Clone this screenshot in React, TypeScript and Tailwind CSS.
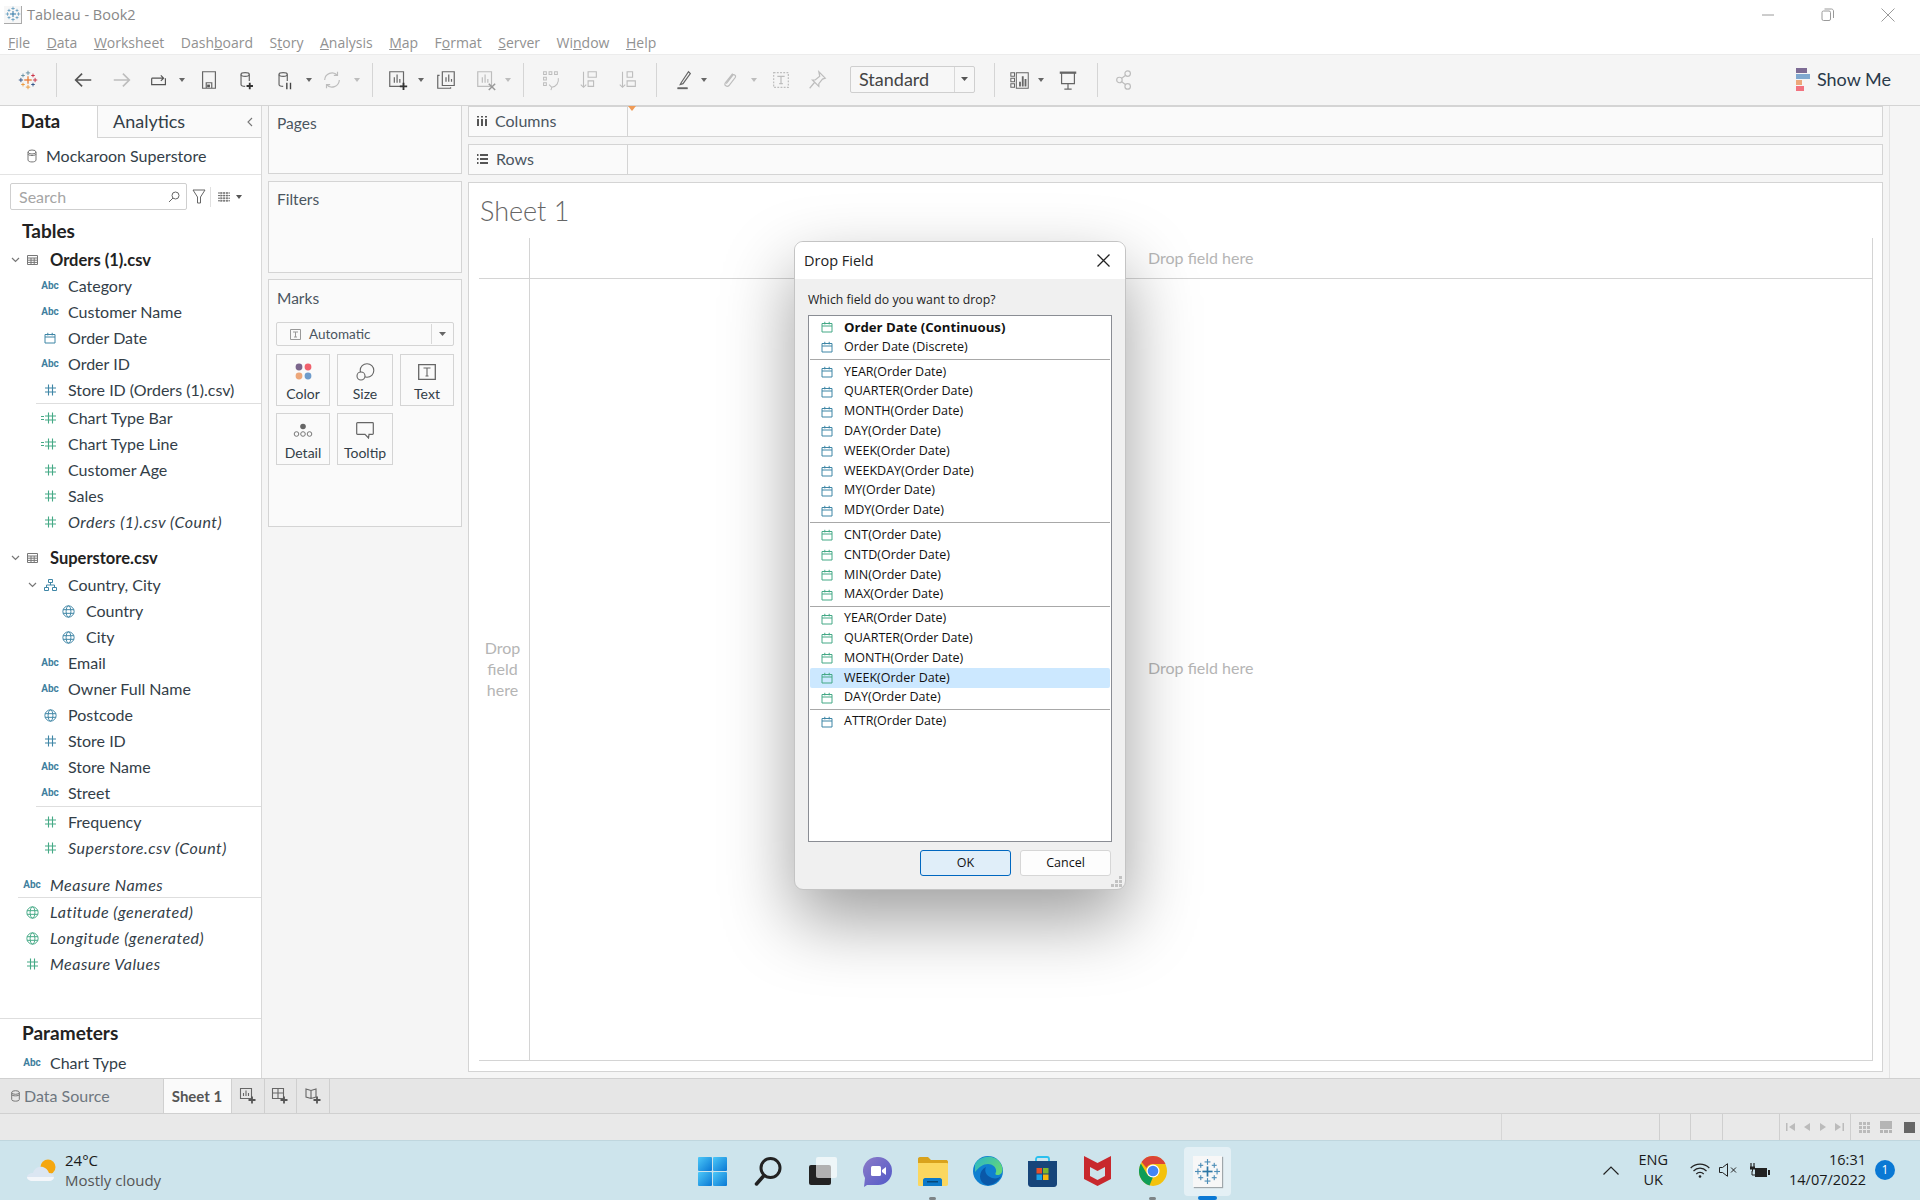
import type { ReactNode } from "react";

const BLUE = "#3f86a6";
const GREEN = "#45a986";
const UI = "[font-family:Lato,sans-serif]";
const SEGOE = "[font-family:'Open_Sans',sans-serif]";

function TableauLogo({ size, colors }: { size: number; colors: string[] }) {
  const [c, n, e, s, w] = colors;
  const plus = (x: number, y: number, r: number, t: number, fill: string) => (
    <g fill={fill}>
      <rect x={x - r} y={y - t / 2} width={r * 2} height={t} />
      <rect x={x - t / 2} y={y - r} width={t} height={r * 2} />
    </g>
  );
  return (
    <svg width={size} height={size} viewBox="0 0 24 24">
      {plus(12, 12, 4.5, 1.5, c)}
      {plus(12, 3.5, 2.6, 1, n)}
      {plus(20.5, 12, 2.6, 1, e)}
      {plus(12, 20.5, 2.6, 1, s)}
      {plus(3.5, 12, 2.6, 1, w)}
      {plus(6, 6.5, 2.2, 1, n)}
      {plus(18, 6.5, 2.2, 1, e)}
      {plus(6, 17.5, 2.2, 1, s)}
      {plus(18, 17.5, 2.2, 1, w)}
    </svg>
  );
}

function Ic({ children, size = 22, color = "#666" }: { children: ReactNode; size?: number; color?: string }) {
  return (
    <svg width={size} height={size} viewBox="0 0 24 24" fill="none" stroke={color} strokeWidth="1.3">
      {children}
    </svg>
  );
}

function Slot({ ml, children }: { ml: string; children: ReactNode }) {
  return <div className={`${ml} flex w-6 shrink-0 items-center justify-center`}>{children}</div>;
}

function Caret({ ml, color = "#666" }: { ml: string; color?: string }) {
  return (
    <div className={`${ml} flex w-2 shrink-0 justify-center`}>
      <svg width="6" height="4" viewBox="0 0 6 4">
        <path d="M0 0h6L3 4z" fill={color} />
      </svg>
    </div>
  );
}

function Sep({ ml }: { ml: string }) {
  return <div className={`${ml} h-[34px] w-px shrink-0 bg-[#d5d5d5]`} />;
}

function Cylinder({ color = "#666" }: { color?: string }) {
  return (
    <>
      <ellipse cx="10" cy="6" rx="4.5" ry="2" stroke={color} />
      <path d="M5.5 6v11c0 1 2 2 4.5 2M14.5 6v7" stroke={color} />
    </>
  );
}

function Toolbar() {
  const off = "#bdbdbd";
  return (
    <div className="flex h-[51px] shrink-0 items-center border-t border-[#ececec] bg-[#f5f5f5]">
      <Slot ml="ml-[16px]">
        <TableauLogo size={20} colors={["#e8762d", "#5b879b", "#c72037", "#eb912b", "#1f457e"]} />
      </Slot>
      <Sep ml="ml-[16px]" />
      <Slot ml="ml-[14px]">
        <Ic color="#555"><path d="M21 12H4M11 5l-7 7 7 7" strokeWidth="1.8" /></Ic>
      </Slot>
      <Slot ml="ml-[15px]">
        <Ic color={off}><path d="M3 12h17M13 5l7 7-7 7" strokeWidth="1.8" /></Ic>
      </Slot>
      <Slot ml="ml-[13px]">
        <Ic color="#555"><path d="M4 10v7h15v-7M4 10h13M14 7l3 3-3 3" strokeWidth="1.3" /></Ic>
      </Slot>
      <Caret ml="ml-[7px]" />
      <Slot ml="ml-[11px]">
        <Ic color="#666"><path d="M5 3h14v18H5zM9 21v-6h6v6" /><rect x="10" y="17" width="3" height="3" fill="#555" stroke="none" /></Ic>
      </Slot>
      <Slot ml="ml-[14px]">
        <Ic color="#666"><Cylinder color="#666" /><path d="M15 15v7M11.5 18.500h7" stroke="#333" strokeWidth="2" /></Ic>
      </Slot>
      <Slot ml="ml-[14px]">
        <Ic color="#666"><Cylinder color="#666" /><path d="M14 15v7M18 15v7" stroke="#444" strokeWidth="1.5" /></Ic>
      </Slot>
      <Caret ml="ml-[8px]" />
      <Slot ml="ml-[7px]">
        <Ic color={off}><path d="M20 12a8 8 0 0 1-14 5M4 12a8 8 0 0 1 14-5M18 3v4h-4M6 21v-4h4" /></Ic>
      </Slot>
      <Caret ml="ml-[9px]" color={off} />
      <Sep ml="ml-[11px]" />
      <Slot ml="ml-[13px]">
        <Ic color="#666"><path d="M3 3h15v16H3zM8 15V9M11 15V6M14 15v-4" /><path d="M18 15v8M14 19h8" stroke="#333" strokeWidth="2" /></Ic>
      </Slot>
      <Caret ml="ml-[7px]" />
      <Slot ml="ml-[9px]">
        <Ic color="#666"><path d="M8 3h13v15H8zM5 7H3v14h14v-1M12 14V9M15 14V6M18 14v-3" /></Ic>
      </Slot>
      <Slot ml="ml-[16px]">
        <Ic color={off}><path d="M3 3h15v16H3zM8 15V9M11 15V6M14 15v-4" /><path d="M15 16l7 7M22 16l-7 7" stroke="#999" strokeWidth="1.6" /></Ic>
      </Slot>
      <Caret ml="ml-[6px]" color={off} />
      <Sep ml="ml-[11px]" />
      <Slot ml="ml-[14px]">
        <Ic color={off}>
          <path d="M5 3h3v3H5zM11 3h3v3h-3zM17 3h3v3h-3zM5 9h3v3H5zM5 15h3v3H5zM21 10c1 5-2 9-7 10M11 17l3 3-1 3" strokeWidth="1.1" />
        </Ic>
      </Slot>
      <Slot ml="ml-[15px]">
        <Ic color={off}><path d="M6 3v17M3 17l3 3 3-3M11 3h9v6h-9zM11 13h6v6h-6z" strokeWidth="1.2" /></Ic>
      </Slot>
      <Slot ml="ml-[15px]">
        <Ic color={off}><path d="M6 3v17M3 17l3 3 3-3M11 3h6v6h-6zM11 13h9v6h-9z" strokeWidth="1.2" /></Ic>
      </Slot>
      <Sep ml="ml-[16px]" />
      <Slot ml="ml-[14px]">
        <Ic color="#666"><path d="M10 15l8-12 2 2-8 11-3 1zM6 21h11" /><path d="M6 21h11" strokeWidth="2" /></Ic>
      </Slot>
      <Caret ml="ml-[5px]" />
      <Slot ml="ml-[9px]">
        <Ic color={off}><path d="M16 5L8 15c-2 3 2 5 4 3l7-9c1-2-2-4-3-2l-7 9" /></Ic>
      </Slot>
      <Caret ml="ml-[9px]" color={off} />
      <Slot ml="ml-[11px]">
        <Ic color={off}><rect x="4" y="4" width="16" height="16" strokeDasharray="2 1.500" /><path d="M8 8h8M12 8v8M10 16h4" /></Ic>
      </Slot>
      <Slot ml="ml-[12px]">
        <Ic color={off}><path d="M14 3l7 7-3 1-4 5 0 3-7-7 3 0 5-4zM9 15l-5 6" /></Ic>
      </Slot>
      <div className={`ml-[21px] flex h-[27px] w-[125px] shrink-0 -translate-y-px items-center rounded-[2px] border border-[#cfcfcf] bg-[#f7f7f7] text-[18px] text-[#444] ${UI}`}>
        <span className="w-[103px] pl-2">Standard</span>
        <span className="flex h-full flex-1 items-center justify-center border-l border-[#d8d8d8]">
          <svg width="7" height="4" viewBox="0 0 7 4"><path d="M0 0h7L3.500 4z" fill="#555" /></svg>
        </span>
      </div>
      <Sep ml="ml-[19px]" />
      <Slot ml="ml-[13px]">
        <Ic color="#666"><path d="M2 4h4v4H2zM2 10h4v4H2zM2 16h4v4H2zM8 4h13v17H8z" strokeWidth="1.1" /><path d="M12 19v-5M15 19V8M18 19v-8" strokeWidth="2" /></Ic>
      </Slot>
      <Caret ml="ml-[5px]" />
      <Slot ml="ml-[11px]">
        <Ic color="#666"><path d="M3 4h18" strokeWidth="2.500" /><path d="M5 4v12h14V4M12 16v6M8 22h8" /></Ic>
      </Slot>
      <Sep ml="ml-[17px]" />
      <Slot ml="ml-[14px]">
        <Ic color={off}><circle cx="7" cy="12" r="3" /><circle cx="16" cy="5" r="3" /><circle cx="16" cy="19" r="3" /><path d="M9.500 10l4-3M9.500 14l4 3" /></Ic>
      </Slot>
      <div className={`ml-auto flex -translate-y-px items-center gap-[7px] pr-[29px] text-[18px] text-[#2a3a4a] ${UI}`}>
        <div className="flex w-[14px] flex-col gap-px">
          <div className="h-[5px] w-[11px] bg-[#7d6b94]" />
          <div className="h-[5px] w-[14px] bg-[#7fa8cf]" />
          <div className="h-[5px] w-[6px] bg-[#eda77a]" />
          <div className="h-[5px] w-[8px] bg-[#f2727f]" />
        </div>
        <span>Show Me</span>
      </div>
    </div>
  );
}

function Cal({ color }: { color: string }) {
  return (
    <svg width="12" height="12" viewBox="0 0 12 12" fill="none" stroke={color} strokeWidth="1">
      <path d="M1 2.500h10v8.500H1zM1 5h10M3.800 .8v2.600M8.200 .8v2.600" />
    </svg>
  );
}

function Hash({ color, dash }: { color: string; dash?: boolean }) {
  return (
    <svg width="18" height="12" viewBox="0 0 18 12" fill="none" stroke={color} strokeWidth="1.1">
      <path d="M7.500 .5v11M11.500 .5v11M4 4h11M4 8h11" />
      {dash ? <path d="M0 4.500h3M0 7.500h3" /> : null}
    </svg>
  );
}

function Globe({ color }: { color: string }) {
  return (
    <svg width="13" height="13" viewBox="0 0 12 12" fill="none" stroke={color} strokeWidth="0.9">
      <circle cx="6" cy="6" r="5.200" />
      <ellipse cx="6" cy="6" rx="2.200" ry="5.200" />
      <path d="M1 4.300h10M1 7.700h10" />
    </svg>
  );
}

function Abc() {
  return <span className={`text-[10px] font-bold leading-none text-[#3f7f9e] [font-family:Roboto,sans-serif]`}>Abc</span>;
}

function TableIcon() {
  return (
    <svg width="11" height="10" viewBox="0 0 11 10" fill="none" stroke="#777" strokeWidth="1">
      <path d="M.5.5h10v9H.5zM.5 3h10M.5 5.200h10M.5 7.400h10M4 3v6.500M7.200 3v6.500" />
    </svg>
  );
}

function Chevron({ className = "" }: { className?: string }) {
  return (
    <svg className={className} width="9" height="6" viewBox="0 0 9 6" fill="none" stroke="#777" strokeWidth="1.2">
      <path d="M1 1l3.500 3.500L8 1" />
    </svg>
  );
}

type RowProps = {
  icon: ReactNode;
  label: string;
  italic?: boolean;
  indent?: string;
  h?: string;
};

function FieldRow({ icon, label, italic, indent = "pl-[41px]", h = "h-[26px]" }: RowProps) {
  return (
    <div className={`flex ${h} shrink-0 items-center ${indent}`}>
      <span className="flex w-[18px] shrink-0 justify-center">{icon}</span>
      <span className={`ml-[9px] whitespace-nowrap text-[16px] text-[#333e48] ${italic ? "italic tracking-[0.5px]" : ""}`}>{label}</span>
    </div>
  );
}

function TableHeader({ label, className = "" }: { label: string; className?: string }) {
  return (
    <div className={`flex h-[26px] items-center pl-[11px] ${className}`}>
      <Chevron />
      <span className="ml-[7px]"><TableIcon /></span>
      <span className="ml-[12px] text-[16.500px] font-bold text-[#222]">{label}</span>
    </div>
  );
}

function Sidebar() {
  return (
    <div className={`flex w-[262px] shrink-0 flex-col border-r border-[#d8d8d8] bg-white ${UI}`}>
      <div className="flex h-[32px] shrink-0">
        <div className="flex w-[98px] items-center justify-center border-r border-[#d4d4d4] pr-[16px] text-[18.500px] font-bold text-[#222]">Data</div>
        <div className="flex flex-1 items-center justify-between border-b border-[#d4d4d4] bg-[#fafafa] pl-[15px] pr-[8px] text-[18px] text-[#333e48]">
          <span>Analytics</span>
          <svg width="6" height="10" viewBox="0 0 6 10" fill="none" stroke="#777" strokeWidth="1.1"><path d="M5 1L1 5l4 4" /></svg>
        </div>
      </div>
      <div className="flex h-[37px] shrink-0 items-center border-b border-[#e3e3e3] pb-px pl-[27px] text-[16px] text-[#333e48]">
        <svg width="10" height="14" viewBox="0 0 10 14" fill="none" stroke="#777" strokeWidth="1"><ellipse cx="5" cy="3" rx="4" ry="2" /><path d="M1 3v8c0 2.600 8 2.600 8 0V3M1 5c0 2 8 2 8 0" /></svg>
        <span className="ml-[9px]">Mockaroon Superstore</span>
      </div>
      <div className="mt-[8px] flex h-[27px] shrink-0 items-center pl-[10px]">
        <div className="flex h-full w-[177px] items-center justify-between rounded-[2px] border border-[#cfcfcf] pl-[8px] pr-[6px] text-[16px] text-[#a5a5a5]">
          <span>Search</span>
          <svg width="12" height="12" viewBox="0 0 12 12" fill="none" stroke="#666" strokeWidth="1"><circle cx="7.500" cy="4.500" r="3.500" /><path d="M5 7l-4 4" /></svg>
        </div>
        <svg className="ml-[5px]" width="14" height="16" viewBox="0 0 14 16" fill="none" stroke="#666" strokeWidth="1"><path d="M1 1h12L8.500 8v6h-3V8z" /></svg>
        <div className="ml-[4px] h-[20px] w-px bg-[#e0e0e0]" />
        <svg className="ml-[7px]" width="12" height="10" viewBox="0 0 12 10" fill="none" stroke="#666" strokeWidth="1"><path d="M0 1h12M0 3.600h12M0 6.200h12M0 8.800h12M3 0v10M6 0v10M9 0v10" strokeDasharray="2 .6" /></svg>
        <svg className="ml-[6px]" width="6" height="4" viewBox="0 0 6 4"><path d="M0 0h6L3 4z" fill="#555" /></svg>
      </div>
      <div className="ml-[22px] mt-[8px] flex h-[26px] shrink-0 items-center text-[19px] font-bold text-[#222]">Tables</div>
      <TableHeader label="Orders (1).csv" className="mt-[3px] shrink-0" />
      <div className="flex shrink-0 flex-col">
        <FieldRow icon={<Abc />} label="Category" />
        <FieldRow icon={<Abc />} label="Customer Name" />
        <FieldRow icon={<Cal color={BLUE} />} label="Order Date" />
        <FieldRow icon={<Abc />} label="Order ID" />
        <FieldRow icon={<Hash color={BLUE} />} label="Store ID (Orders (1).csv)" />
      </div>
      <div className="ml-[36px] h-px shrink-0 bg-[#dedede]" />
      <div className="mt-px flex shrink-0 flex-col">
        <FieldRow icon={<Hash color={GREEN} dash />} label="Chart Type Bar" />
        <FieldRow icon={<Hash color={GREEN} dash />} label="Chart Type Line" />
        <FieldRow icon={<Hash color={GREEN} />} label="Customer Age" />
        <FieldRow icon={<Hash color={GREEN} />} label="Sales" />
        <FieldRow icon={<Hash color={GREEN} />} label="Orders (1).csv (Count)" italic />
      </div>
      <TableHeader label="Superstore.csv" className="mt-[10px] shrink-0" />
      <div className="mt-px flex shrink-0 flex-col">
        <div className="flex h-[26px] items-center pl-[28px]">
          <Chevron />
          <span className="ml-[4px] flex w-[18px] justify-center">
            <svg width="13" height="12" viewBox="0 0 13 12" fill="none" stroke={BLUE} strokeWidth="1"><path d="M4.500.5h4v3h-4zM.5 8.500h4v3h-4zM8.500 8.500h4v3h-4zM6.500 3.500V6M2.500 8.500V6h8v2.500" /></svg>
          </span>
          <span className="ml-[9px] text-[16px] text-[#333e48]">Country, City</span>
        </div>
        <FieldRow icon={<Globe color={BLUE} />} label="Country" indent="pl-[59px]" />
        <FieldRow icon={<Globe color={BLUE} />} label="City" indent="pl-[59px]" />
        <FieldRow icon={<Abc />} label="Email" />
        <FieldRow icon={<Abc />} label="Owner Full Name" />
        <FieldRow icon={<Globe color={BLUE} />} label="Postcode" />
        <FieldRow icon={<Hash color={BLUE} />} label="Store ID" />
        <FieldRow icon={<Abc />} label="Store Name" />
        <FieldRow icon={<Abc />} label="Street" />
      </div>
      <div className="ml-[36px] h-px shrink-0 bg-[#dedede]" />
      <div className="mt-[2px] flex shrink-0 flex-col">
        <FieldRow icon={<Hash color={GREEN} />} label="Frequency" />
        <FieldRow icon={<Hash color={GREEN} />} label="Superstore.csv (Count)" italic />
      </div>
      <div className="mt-[11px] flex shrink-0 flex-col">
        <FieldRow icon={<Abc />} label="Measure Names" italic indent="pl-[23px]" h="h-[25px]" />
      </div>
      <div className="ml-[18px] h-px shrink-0 bg-[#dedede]" />
      <div className="mt-px flex shrink-0 flex-col">
        <FieldRow icon={<Globe color={GREEN} />} label="Latitude (generated)" italic indent="pl-[23px]" />
        <FieldRow icon={<Globe color={GREEN} />} label="Longitude (generated)" italic indent="pl-[23px]" />
        <FieldRow icon={<Hash color={GREEN} />} label="Measure Values" italic indent="pl-[23px]" />
      </div>
      <div className="mt-[41px] h-px shrink-0 bg-[#dedede]" />
      <div className="ml-[22px] mt-px flex h-[26px] shrink-0 items-center text-[19px] font-bold text-[#222]">Parameters</div>
      <div className="mt-[4px] shrink-0">
        <FieldRow icon={<Abc />} label="Chart Type" indent="pl-[23px]" />
      </div>
    </div>
  );
}

function MarkCard({ label, w, icon }: { label: string; w: string; icon: ReactNode }) {
  return (
    <div className={`flex ${w} h-[52px] flex-col items-center border border-[#d4d4d4] bg-[#fafafa]`}>
      <div className="flex h-[29px] items-center justify-center pt-1">{icon}</div>
      <span className="mt-px text-[14px] leading-[18px] text-[#333e48]">{label}</span>
    </div>
  );
}

function LeftPanels() {
  return (
    <div className={`ml-[6px] flex w-[194px] shrink-0 flex-col text-[#4a5560] ${UI}`}>
      <div className="h-[68px] border-x border-b border-[#d4d4d4] bg-[#fafafa] pl-[8px] pt-[6px] text-[15.500px]">Pages</div>
      <div className="mt-[7px] h-[92px] border border-[#d4d4d4] bg-[#fafafa] pl-[8px] pt-[6px] text-[15.500px]">Filters</div>
      <div className="mt-[6px] h-[248px] border border-[#d4d4d4] bg-[#fafafa] px-[7px] pt-[7px]">
        <div className="pl-px text-[15.500px] leading-[22px]">Marks</div>
        <div className="mt-[13px] flex h-[24px] items-center rounded-[2px] border border-[#d4d4d4] text-[13.500px]">
          <div className="flex w-[155px] items-center border-r border-[#d8d8d8] pl-[13px]">
            <svg width="11" height="11" viewBox="0 0 11 11" fill="none" stroke="#999" strokeWidth="1"><path d="M.5.5h10v10H.5zM3 3h5M5.500 3v5M4 8h3" /></svg>
            <span className="ml-[8px]">Automatic</span>
          </div>
          <span className="flex flex-1 justify-center">
            <svg width="7" height="4" viewBox="0 0 7 4"><path d="M0 0h7L3.500 4z" fill="#666" /></svg>
          </span>
        </div>
        <div className="mt-[8px] flex gap-[7px]">
          <MarkCard
            label="Color"
            w="w-[54px]"
            icon={
              <svg width="17" height="17" viewBox="0 0 17 17">
                <circle cx="4" cy="4" r="3.400" fill="#7b668c" />
                <circle cx="13" cy="4" r="3.400" fill="#f0616d" />
                <circle cx="4" cy="13" r="3.400" fill="#eda77a" />
                <circle cx="13" cy="13" r="3.400" fill="#6f9ccb" />
              </svg>
            }
          />
          <MarkCard
            label="Size"
            w="w-[56px]"
            icon={
              <svg width="19" height="18" viewBox="0 0 19 18" fill="none" stroke="#666" strokeWidth="1.100">
                <circle cx="11" cy="7.500" r="6.800" />
                <circle cx="5" cy="13" r="4" fill="#fafafa" />
              </svg>
            }
          />
          <MarkCard
            label="Text"
            w="w-[54px]"
            icon={
              <svg width="18" height="16" viewBox="0 0 18 16" fill="none" stroke="#666" strokeWidth="1.300">
                <path d="M.7.7h16.600v14.600H.7z" />
                <path d="M5.500 4h7M9 4v8M7.500 12h3" strokeWidth="1.100" />
              </svg>
            }
          />
        </div>
        <div className="mt-[7px] flex gap-[7px]">
          <MarkCard
            label="Detail"
            w="w-[54px]"
            icon={
              <svg width="20" height="16" viewBox="0 0 20 16" fill="none" stroke="#777" strokeWidth="1">
                <circle cx="10" cy="3.500" r="2.800" fill="#666" stroke="none" />
                <circle cx="3.500" cy="11" r="2.300" />
                <circle cx="10" cy="11" r="2.300" />
                <circle cx="16.500" cy="11" r="2.300" />
              </svg>
            }
          />
          <MarkCard
            label="Tooltip"
            w="w-[56px]"
            icon={
              <svg width="18" height="17" viewBox="0 0 18 17" fill="none" stroke="#666" strokeWidth="1.200">
                <path d="M1.500.7h15c.5 0 .8.3.8.8v10c0 .5-.3.8-.8.8H13l-.5 3.700-3.500-3.700H1.500c-.5 0-.8-.3-.8-.8v-10c0-.5.3-.8.8-.8z" />
              </svg>
            }
          />
        </div>
      </div>
    </div>
  );
}

function Shelf({ label, icon }: { label: string; icon: ReactNode }) {
  return (
    <div className="flex h-[31px] border border-[#d4d4d4] bg-[#fafafa]">
      <div className="flex w-[159px] items-center gap-[8px] border-r border-[#d4d4d4] pb-[2px] pl-[8px] text-[16px] text-[#4a5560]">
        {icon}
        <span>{label}</span>
      </div>
    </div>
  );
}

function Canvas() {
  return (
    <div className="flex flex-1 flex-col border border-[#d4d4d4] bg-white pb-[10px] pl-[10px] pr-[9px]">
      <div className="flex h-[55px] shrink-0 items-center pl-px pt-px text-[27px] font-light text-[#666] [font-family:Lato,sans-serif]">Sheet 1</div>
      <div className="grid min-h-0 flex-1 grid-cols-[51px_1fr] grid-rows-[41px_1fr] border-b border-r border-[#d4d4d4] text-[16px] text-[#b5b5b5] [font-family:Lato,sans-serif]">
        <div className="border-b border-r border-[#d4d4d4]" />
        <div className="flex items-center border-b border-[#d4d4d4] pb-px pl-[618px]">Drop field here</div>
        <div className="flex items-center justify-center border-r border-[#d4d4d4] pb-[3px] pr-[3px] text-center leading-[21px]">
          Drop
          <br />
          field
          <br />
          here
        </div>
        <div className="flex items-center pb-[3px] pl-[618px]">Drop field here</div>
      </div>
    </div>
  );
}

function DlgRow({ label, color, bold, selected }: { label: string; color: string; bold?: boolean; selected?: boolean }) {
  return (
    <div className={`flex h-[19.800px] shrink-0 items-center rounded-[2px] pl-[11px] ${selected ? "bg-[#cce8ff]" : ""}`}>
      <Cal color={color} />
      <span className={`ml-[11px] text-[#111] ${bold ? "text-[13.200px] font-bold" : "text-[12.500px]"}`}>{label}</span>
    </div>
  );
}

function DlgDivider({ h }: { h: string }) {
  return (
    <div className={`flex ${h} shrink-0 items-center`}>
      <div className="h-px w-full bg-[#a8a8a8]" />
    </div>
  );
}

function Dialog() {
  return (
    <div
      className={`absolute left-[794px] top-[241px] flex h-[649px] w-[332px] flex-col overflow-hidden rounded-[9px] border border-[#c4c4c4] bg-[#f0f0f0] shadow-[0_30px_70px_rgba(0,0,0,0.38)] ${SEGOE}`}
    >
      <div className="flex h-[37px] shrink-0 items-center justify-between bg-white pl-[9px] pr-[15px]">
        <span className="text-[14.500px] text-[#222]">Drop Field</span>
        <svg width="13" height="13" viewBox="0 0 13 13" stroke="#222" strokeWidth="1.300"><path d="M.5.5l12 12M12.500.5l-12 12" /></svg>
      </div>
      <div className="relative flex flex-1 flex-col px-[13px] pb-[13px]">
        <div className="flex h-[36px] shrink-0 items-center pt-[7px] text-[12.250px] text-[#222]">Which field do you want to drop?</div>
        <div className="flex h-[527px] shrink-0 flex-col border border-[#8a8d94] bg-white px-px pt-[1.500px]">
          <DlgRow label="Order Date (Continuous)" color={GREEN} bold />
          <DlgRow label="Order Date (Discrete)" color={BLUE} />
          <DlgDivider h="h-[5px]" />
          <DlgRow label="YEAR(Order Date)" color={BLUE} />
          <DlgRow label="QUARTER(Order Date)" color={BLUE} />
          <DlgRow label="MONTH(Order Date)" color={BLUE} />
          <DlgRow label="DAY(Order Date)" color={BLUE} />
          <DlgRow label="WEEK(Order Date)" color={BLUE} />
          <DlgRow label="WEEKDAY(Order Date)" color={BLUE} />
          <DlgRow label="MY(Order Date)" color={BLUE} />
          <DlgRow label="MDY(Order Date)" color={BLUE} />
          <DlgDivider h="h-[5px]" />
          <DlgRow label="CNT(Order Date)" color={GREEN} />
          <DlgRow label="CNTD(Order Date)" color={GREEN} />
          <DlgRow label="MIN(Order Date)" color={GREEN} />
          <DlgRow label="MAX(Order Date)" color={GREEN} />
          <DlgDivider h="h-[4px]" />
          <DlgRow label="YEAR(Order Date)" color={GREEN} />
          <DlgRow label="QUARTER(Order Date)" color={GREEN} />
          <DlgRow label="MONTH(Order Date)" color={GREEN} />
          <DlgRow label="WEEK(Order Date)" color={GREEN} selected />
          <DlgRow label="DAY(Order Date)" color={GREEN} />
          <DlgDivider h="h-[4px]" />
          <DlgRow label="ATTR(Order Date)" color={BLUE} />
        </div>
        <div className="mr-px mt-[8px] flex justify-end gap-[9px] text-[12.500px] text-[#111]">
          <div className="flex h-[26px] w-[91px] items-center justify-center rounded-[3px] border border-[#0067c0] bg-[#e0eef9]">OK</div>
          <div className="flex h-[26px] w-[91px] items-center justify-center rounded-[3px] border border-[#d6d6d6] bg-[#fdfdfd]">Cancel</div>
        </div>
        <svg className="absolute bottom-[2px] right-[2px]" width="12" height="12" viewBox="0 0 12 12" fill="#c2c2c2">
          <path d="M8 1h3v3H8zM4 5h3v3H4zM8 5h3v3H8zM0 9h3v3H0zM4 9h3v3H4zM8 9h3v3H8z" />
        </svg>
      </div>
    </div>
  );
}

function TabIcon({ children }: { children: ReactNode }) {
  return (
    <div className="flex w-[32.500px] items-center justify-center border-r border-[#cfcfcf]">
      <svg width="18" height="18" viewBox="0 0 18 18" fill="none" stroke="#666" strokeWidth="1.100">
        {children}
        <path d="M13 9.500v7M9.500 13h7" strokeWidth="1.800" stroke="#555" />
      </svg>
    </div>
  );
}

function BottomTabs() {
  return (
    <div className={`flex h-[36px] shrink-0 border-y border-[#d0d0d0] bg-[#e6e6e6] ${UI}`}>
      <div className="flex w-[163px] items-center gap-[4px] pl-[11px] text-[16px] text-[#6e7780]">
        <svg width="9" height="12" viewBox="0 0 9 12" fill="none" stroke="#777" strokeWidth="1"><ellipse cx="4.500" cy="2.500" rx="3.800" ry="1.800" /><path d="M.7 2.500v7c0 2.200 7.600 2.200 7.600 0v-7M.7 4.500c0 1.800 7.600 1.800 7.600 0" /></svg>
        <span>Data Source</span>
      </div>
      <div className="flex w-[69px] items-center justify-center border-x border-[#d0d0d0] bg-[#fafafa] pr-px text-[15px] font-bold text-[#555]">Sheet 1</div>
      <TabIcon><path d="M1.500 1.500h11v10h-11zM4.500 9V6M7 9V3.500M9.500 9V6" /></TabIcon>
      <TabIcon><path d="M1.500 1.500h11v10h-11zM1.500 6h11M7 1.500v10" /></TabIcon>
      <TabIcon><path d="M2 2l5 1.500L12 2v8L7 11.500 2 10zM7 3.500v8" /></TabIcon>
    </div>
  );
}

function StatusBar() {
  return (
    <div className="flex h-[26px] shrink-0 items-stretch justify-end bg-[#e9e9e9]">
      <div className="w-[158px] border-l border-[#d6d6d6]" />
      <div className="w-[31px] border-l border-[#cfcfcf]" />
      <div className="w-[32px] border-l border-[#cfcfcf]" />
      <div className="w-[57px] border-l border-[#cfcfcf]" />
      <div className="flex w-[71px] items-center justify-center gap-[6px] border-l border-[#cfcfcf]">
        <svg width="10" height="10" viewBox="0 0 10 10" fill="#bbb"><path d="M0 1h1.500v8H0zM9 1v8L3 5z" /></svg>
        <svg width="10" height="10" viewBox="0 0 10 10" fill="#bbb"><path d="M8 1v8L2 5z" /></svg>
        <svg width="10" height="10" viewBox="0 0 10 10" fill="#bbb"><path d="M2 1v8l6-4z" /></svg>
        <svg width="10" height="10" viewBox="0 0 10 10" fill="#bbb"><path d="M1 1v8l6-4zM8.500 1H10v8H8.500z" /></svg>
      </div>
      <div className="flex w-[70px] items-center gap-[10px] border-l border-[#cfcfcf] pl-[8px]">
        <div className="grid grid-cols-3 gap-px">
          {[0, 1, 2, 3, 4, 5, 6, 7, 8].map((i) => (
            <div key={i} className="h-[3px] w-[3px] bg-[#bbb]" />
          ))}
        </div>
        <div className="flex w-[12px] flex-col gap-px">
          <div className="h-[8px] bg-[#b5b5b5]" />
          <div className="flex gap-px">
            <div className="h-[3px] flex-1 bg-[#b5b5b5]" />
            <div className="h-[3px] flex-1 bg-[#b5b5b5]" />
            <div className="h-[3px] flex-1 bg-[#b5b5b5]" />
          </div>
        </div>
        <div className="ml-[2px] h-[11px] w-[11px] bg-[#666]" />
      </div>
    </div>
  );
}

function StartIcon() {
  return (
    <svg width="29" height="29" viewBox="0 0 29 29">
      <defs>
        <linearGradient id="win" x1="0" y1="0" x2="1" y2="1">
          <stop offset="0" stopColor="#4cc8f8" />
          <stop offset="1" stopColor="#0a78d4" />
        </linearGradient>
      </defs>
      <rect x="0" y="0" width="14" height="14" rx="1" fill="url(#win)" />
      <rect x="15" y="0" width="14" height="14" rx="1" fill="url(#win)" />
      <rect x="0" y="15" width="14" height="14" rx="1" fill="url(#win)" />
      <rect x="15" y="15" width="14" height="14" rx="1" fill="url(#win)" />
    </svg>
  );
}

function SearchIcon() {
  return (
    <svg width="28" height="30" viewBox="0 0 28 30" fill="none" stroke="#222" strokeWidth="3">
      <circle cx="16.500" cy="12" r="9.500" />
      <path d="M10 19.500L2.500 28" strokeLinecap="round" strokeWidth="3.500" />
    </svg>
  );
}

function TaskViewIcon() {
  return (
    <svg width="30" height="30" viewBox="0 0 30 30">
      <rect x="1" y="9" width="22" height="20" rx="2" fill="#222" />
      <rect x="8" y="1" width="21" height="21" rx="2" fill="#ffffff" fillOpacity="0.65" />
    </svg>
  );
}

function ChatIcon() {
  return (
    <svg width="30" height="31" viewBox="0 0 30 31">
      <defs>
        <linearGradient id="chat" x1="0" y1="0" x2="1" y2="1">
          <stop offset="0" stopColor="#8c7bc8" />
          <stop offset="1" stopColor="#5058c8" />
        </linearGradient>
      </defs>
      <path d="M15 1a14 14 0 0 1 0 28H4l-3 2 1-9A14 14 0 0 1 15 1z" fill="url(#chat)" />
      <rect x="8" y="10" width="10" height="10" rx="1.500" fill="#fff" />
      <path d="M19 14l4-3v8l-4-3z" fill="#fff" />
    </svg>
  );
}

function FolderIcon() {
  return (
    <svg width="31" height="30" viewBox="0 0 31 30">
      <path d="M1 3c0-1 .5-2 2-2h8l3 3h15c1 0 2 .5 2 2v4H1z" fill="#d9a21c" />
      <path d="M1 7h29c.5 0 1 .5 1 1v20c0 1-.5 2-2 2H2c-1 0-1-1-1-2z" fill="#fbd75f" />
      <path d="M6 30v-6c0-1 1-2 2-2h15c1 0 2 1 2 2v6z" fill="#0c79c9" />
      <rect x="10" y="25" width="11" height="1.500" fill="#05487a" />
    </svg>
  );
}

function EdgeIcon() {
  return (
    <svg width="30" height="30" viewBox="0 0 30 30">
      <defs>
        <linearGradient id="edgeA" x1="0" y1="0" x2="1" y2="0.600">
          <stop offset="0" stopColor="#2bb6c8" />
          <stop offset="1" stopColor="#62d67a" />
        </linearGradient>
      </defs>
      <circle cx="15" cy="15" r="15" fill="#0f7fd0" />
      <path d="M2 8C6 0 22-3 28 8c3 6 1 11-3 11-3 0-3-1-2-3 1-4-3-8-8-8-5 0-9 3-13 8z" fill="url(#edgeA)" />
      <path d="M13 29C5 26 5 15 13 11c-2 4 0 9 6 11 4 1 7 0 9-2-3 6-9 10-15 9z" fill="#0a58a8" />
    </svg>
  );
}

function StoreIcon() {
  return (
    <svg width="29" height="31" viewBox="0 0 29 31">
      <path d="M8 6V3c0-1 1-2 2-2h9c1 0 2 1 2 2v3" fill="none" stroke="#2bc0ee" strokeWidth="1.800" />
      <path d="M0 5h29v23c0 1.500-1 3-3 3H3c-2 0-3-1.500-3-3z" fill="#17457a" />
      <rect x="8.500" y="12" width="5.500" height="5.500" fill="#e8502a" />
      <rect x="15" y="12" width="5.500" height="5.500" fill="#7cb62e" />
      <rect x="8.500" y="18.500" width="5.500" height="5.500" fill="#1aa3e8" />
      <rect x="15" y="18.500" width="5.500" height="5.500" fill="#f7b70b" />
    </svg>
  );
}

function McAfeeIcon() {
  return (
    <svg width="27" height="30" viewBox="0 0 27 30">
      <path fillRule="evenodd" d="M0 0l13.500 7L27 0v23l-13.500 7L0 23zM6 11v9l7.500 4 7.500-4v-9l-7.500 4z" fill="#c8282d" />
    </svg>
  );
}

function ChromeIcon() {
  return (
    <svg width="28" height="30" viewBox="0 0 28 30">
      <ellipse cx="14" cy="15" rx="14" ry="15" fill="#f4c20d" />
      <path d="M14 0a14 15 0 0 1 12.500 8H14a7 7 0 0 0-6.500 4L2.500 6A14 15 0 0 1 14 0z" fill="#db4437" />
      <path d="M1.800 7.500L8 18c1.400 2.200 3 3 6 3l-3.500 8.500A14 15 0 0 1 1.800 7.500z" fill="#0f9d58" />
      <circle cx="14" cy="15" r="6.500" fill="#fff" />
      <circle cx="14" cy="15" r="5.300" fill="#4285f4" />
    </svg>
  );
}

function TaskItem({ children, dot }: { children: ReactNode; dot?: boolean }) {
  return (
    <div className="relative flex h-[60px] w-[55px] items-center justify-center">
      {children}
      {dot ? <div className="absolute bottom-[1px] h-[3.500px] w-[7px] rounded-full bg-[#7e8487]" /> : null}
    </div>
  );
}

function Taskbar() {
  return (
    <div className={`grid h-[60px] shrink-0 grid-cols-[1fr_auto_1fr] items-center border-t border-[#bfd6de] bg-[#cde4ec] text-[#1a1a1a] ${SEGOE}`}>
      <div className="flex items-center pl-[27px]">
        <svg width="30" height="26" viewBox="0 0 30 26">
          <circle cx="21" cy="9" r="7.500" fill="#f5a70f" />
          <path d="M6 23c-4 0-6-2-6-4s3-4 6-4c1-4 5-7 10-6 3 1 5 3 6 6 3 0 5 2 5 4s-2 4-5 4z" fill="#dbe6f2" />
          <path d="M6 23c-4 0-6-2-6-4h27c0 2-2 4-5 4z" fill="#f3f6fa" />
        </svg>
        <div className="ml-[8px] flex -translate-y-px flex-col text-[15px] leading-[20px]">
          <span>24°C</span>
          <span className="text-[#555]">Mostly cloudy</span>
        </div>
      </div>
      <div className="flex items-center">
        <TaskItem><StartIcon /></TaskItem>
        <TaskItem><SearchIcon /></TaskItem>
        <TaskItem><TaskViewIcon /></TaskItem>
        <TaskItem><ChatIcon /></TaskItem>
        <TaskItem dot><FolderIcon /></TaskItem>
        <TaskItem><EdgeIcon /></TaskItem>
        <TaskItem><StoreIcon /></TaskItem>
        <TaskItem><McAfeeIcon /></TaskItem>
        <TaskItem dot><ChromeIcon /></TaskItem>
        <TaskItem>
          <div className="absolute left-[4px] top-[6px] h-[49px] w-[47px] rounded-[4px] bg-[#e4f0f5]" />
          <div className="relative flex h-[31px] w-[29px] items-center justify-center bg-[#f7f7f7] shadow-[1px_1px_1px_rgba(0,0,0,0.3)]">
            <TableauLogo size={27} colors={["#2e77a6", "#4f8fb8", "#4f8fb8", "#4f8fb8", "#4f8fb8"]} />
          </div>
          <div className="absolute bottom-[1px] h-[4px] w-[19px] rounded-full bg-[#0a78d4]" />
        </TaskItem>
      </div>
      <div className="flex -translate-y-px items-center justify-end text-[14.500px] leading-[20px]">
        <svg width="16" height="9" viewBox="0 0 16 9" fill="none" stroke="#222" strokeWidth="1.200"><path d="M.5 8.500L8 1l7.500 7.500" /></svg>
        <div className="ml-[20px] flex flex-col items-center">
          <span>ENG</span>
          <span>UK</span>
        </div>
        <svg className="ml-[22px]" width="20" height="15" viewBox="0 0 20 15" fill="none" stroke="#222" strokeWidth="1.200">
          <path d="M.7 5a13 13 0 0 1 18.600 0M3.500 8a9 9 0 0 1 13 0M6.300 11a5 5 0 0 1 7.400 0" />
          <circle cx="10" cy="13.500" r="1.300" fill="#222" stroke="none" />
        </svg>
        <svg className="ml-[9px]" width="19" height="14" viewBox="0 0 19 14" fill="none" stroke="#222" strokeWidth="1">
          <path d="M.5 4.500h3L8.500.7v12.600l-5-3.800h-3zM12 4.500l5 5M17 4.500l-5 5" />
        </svg>
        <svg className="ml-[12px]" width="20" height="15" viewBox="0 0 20 15">
          <path d="M1 0v4M4 0v4" stroke="#222" strokeWidth="1.200" />
          <path d="M0 3.500h5v3H3v2H2v-2H0z" fill="#222" />
          <path d="M5 5h12v9H5zM18 7h2v5h-2z" fill="#222" />
          <path d="M2 8v4h3" fill="none" stroke="#222" strokeWidth="1" />
        </svg>
        <div className="ml-[19px] flex flex-col items-end">
          <span>16:31</span>
          <span>14/07/2022</span>
        </div>
        <div className="ml-[9px] mr-[25px] flex h-[20px] w-[20px] items-center justify-center rounded-full bg-[#0a78d4] text-[12px] text-white">1</div>
      </div>
    </div>
  );
}

function Menu() {
  return (
    <div className={`flex h-[25px] shrink-0 items-center gap-[16.500px] pl-[8px] pt-px text-[14px] text-[#919191] ${SEGOE}`}>
      <span><u>F</u>ile</span>
      <span><u>D</u>ata</span>
      <span><u>W</u>orksheet</span>
      <span>Dash<u>b</u>oard</span>
      <span>S<u>t</u>ory</span>
      <span><u>A</u>nalysis</span>
      <span><u>M</u>ap</span>
      <span>F<u>o</u>rmat</span>
      <span><u>S</u>erver</span>
      <span>Wi<u>n</u>dow</span>
      <span><u>H</u>elp</span>
    </div>
  );
}

function TitleBar() {
  return (
    <div className={`flex h-[29px] shrink-0 items-center pl-[4px] text-[14.500px] text-[#888] ${SEGOE}`}>
      <div className="flex h-[18px] w-[18px] items-center justify-center border-b border-r border-[#aaa] bg-[#f7f7f7]">
        <TableauLogo size={16} colors={["#2e77a6", "#4f8fb8", "#4f8fb8", "#4f8fb8", "#4f8fb8"]} />
      </div>
      <span className="ml-[5px]">Tableau - Book2</span>
      <div className="ml-auto flex items-center gap-[47px] pr-[25px]">
        <svg width="12" height="2" viewBox="0 0 12 2"><path d="M0 1h12" stroke="#9a9a9a" strokeWidth="1" /></svg>
        <svg width="13" height="13" viewBox="0 0 13 13" fill="none" stroke="#9a9a9a" strokeWidth="1"><rect x="1" y="3" width="8.500" height="9.500" rx="1.500" /><path d="M3.500 1h7c1 0 2 1 2 2v7" /></svg>
        <svg width="14" height="14" viewBox="0 0 14 14" stroke="#9a9a9a" strokeWidth="1"><path d="M.5.5l13 13M13.500.5l-13 13" /></svg>
      </div>
    </div>
  );
}

export default function App() {
  return (
    <div className="relative flex h-[1200px] w-[1920px] flex-col overflow-hidden bg-white">
      <TitleBar />
      <Menu />
      <Toolbar />
      <div className="flex min-h-0 flex-1 border-t border-[#d4d4d4] bg-[#f5f5f5]">
        <Sidebar />
        <LeftPanels />
        <div className={`ml-[6px] flex w-[1415px] shrink-0 flex-col pb-[6px] ${UI}`}>
          <div className="flex flex-col gap-[7px]">
            <Shelf
              label="Columns"
              icon={
                <svg width="10" height="10" viewBox="0 0 10 10" fill="#555">
                  <path d="M0 3h2v7H0zM4 3h2v7H4zM8 3h2v7H8zM0 0h2v1.500H0zM4 0h2v1.500H4zM8 0h2v1.500H8z" />
                </svg>
              }
            />
            <Shelf
              label="Rows"
              icon={
                <svg width="11" height="10" viewBox="0 0 11 10" fill="#555">
                  <path d="M3 0h8v2H3zM3 4h8v2H3zM3 8h8v2H3zM0 0h1.500v2H0zM0 4h1.500v2H0zM0 8h1.500v2H0z" />
                </svg>
              }
            />
          </div>
          <div className="mt-[7px] flex min-h-0 flex-1">
            <Canvas />
          </div>
        </div>
        <div className="ml-[6px] flex-1 border-l border-[#e3e3e3]" />
      </div>
      <BottomTabs />
      <StatusBar />
      <Taskbar />
      <Dialog />
      <svg className="absolute left-[628px] top-[106px]" width="8" height="5" viewBox="0 0 8 5"><path d="M0 0h8L4 5z" fill="#ef9a55" /></svg>
    </div>
  );
}
